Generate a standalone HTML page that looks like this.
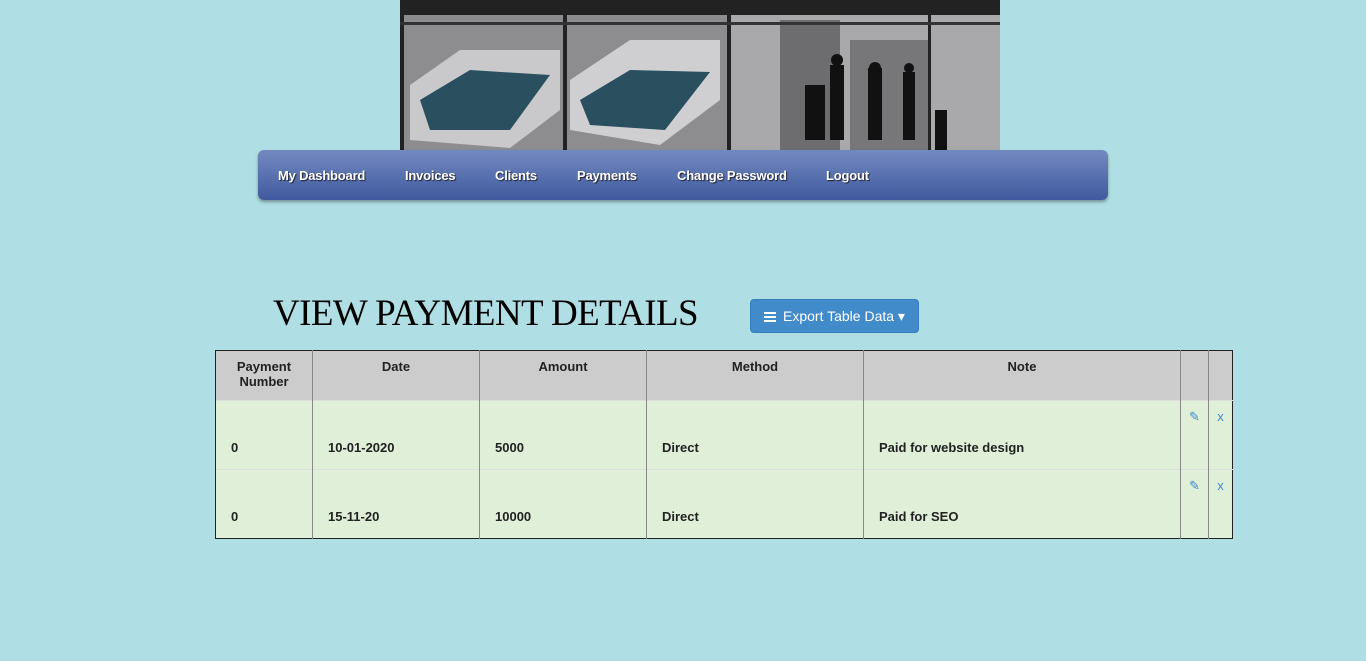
<!DOCTYPE html>
<html><head><style>
body{margin:0;background:#afdfe4;font-family:"Liberation Sans",sans-serif;width:1366px;height:661px;overflow:hidden;position:relative}
.banner{position:absolute;left:400px;top:0;width:600px;height:150px}
.nav{position:absolute;left:258px;top:150px;width:850px;height:50px;border-radius:6px;background:linear-gradient(#7389c0,#3f5a9e);box-shadow:0 2px 3px rgba(0,0,0,.35)}
.nav a{position:absolute;top:18px;color:#fff;font-size:13px;font-weight:bold;text-shadow:1px 1px 1px #223;letter-spacing:-0.2px}
h1{position:absolute;left:273px;top:292px;margin:0;font-family:"Liberation Serif",serif;font-weight:normal;font-size:37px;letter-spacing:-0.6px}
.btn{position:absolute;left:750px;top:299px;width:169px;height:34px;background:#428bca;border:1px solid #357ebd;border-radius:4px;box-sizing:border-box;color:#fff;font-size:14px;line-height:32px;padding-left:32px}
.btn i{position:absolute;left:13px;top:12px;width:12px;height:2px;background:#fff;box-shadow:0 4px #fff,0 8px #fff}
table{position:absolute;left:215px;top:350px;border-collapse:collapse;border:1px solid #222;font-size:13px;font-weight:bold;color:#222}
th{background:#cccccc;height:50px;vertical-align:top;padding-top:8px;box-sizing:border-box;border-left:1px solid #888;text-align:center;font-size:13px}
td{background:#dfefd8;height:69px;border-left:1px solid #888;border-top:1px solid #ddd;padding:0 0 0 15px;vertical-align:top;padding-top:39px;box-sizing:border-box}
td.f,th.f{border-left:1px solid #222}
td.ic{padding:8px 0 0 0;text-align:center;color:#428bca;font-weight:normal}
</style></head><body>
<svg class="banner" viewBox="0 0 600 150">
<rect width="600" height="150" fill="#8d8d90"/>
<rect width="600" height="15" fill="#222"/>
<rect x="330" y="15" width="270" height="135" fill="#a9a9ab"/>
<rect x="380" y="20" width="60" height="130" fill="#6d6d70"/>
<rect x="450" y="40" width="80" height="110" fill="#77777a"/>
<polygon points="10,85 60,50 160,50 160,110 110,148 10,140" fill="#c9c9cc"/>
<polygon points="20,100 70,70 150,75 110,130 30,130" fill="#2a5060"/>
<polygon points="170,80 230,40 320,40 320,100 260,145 170,130" fill="#cfcfd2"/>
<polygon points="180,100 230,70 310,72 265,130 190,125" fill="#2a5060"/>
<rect x="0" y="15" width="4" height="135" fill="#222"/>
<rect x="163" y="15" width="4" height="135" fill="#222"/>
<rect x="327" y="15" width="4" height="135" fill="#222"/>
<rect x="528" y="15" width="3" height="135" fill="#222"/>
<rect x="0" y="22" width="600" height="3" fill="#333"/>
<g fill="#111"><rect x="405" y="85" width="20" height="55"/><rect x="430" y="65" width="14" height="75"/><rect x="468" y="68" width="14" height="72"/><rect x="503" y="72" width="12" height="68"/><circle cx="437" cy="60" r="6"/><circle cx="475" cy="68" r="6"/><circle cx="509" cy="68" r="5"/><rect x="535" y="110" width="12" height="40"/></g>
</svg>
<div class="nav">
<a style="left:20px">My Dashboard</a><a style="left:147px">Invoices</a><a style="left:237px">Clients</a><a style="left:319px">Payments</a><a style="left:419px">Change Password</a><a style="left:568px">Logout</a>
</div>
<h1>VIEW PAYMENT DETAILS</h1>
<div class="btn"><i></i>Export Table Data ▾</div>
<table>
<tr><th class="f" style="width:97px">Payment<br>Number</th><th style="width:167px">Date</th><th style="width:167px">Amount</th><th style="width:217px">Method</th><th style="width:317px">Note</th><th style="width:28px"></th><th style="width:24px"></th></tr>
<tr><td class="f">0</td><td>10-01-2020</td><td>5000</td><td>Direct</td><td>Paid for website design</td><td class="ic">✎</td><td class="ic">x</td></tr>
<tr><td class="f">0</td><td>15-11-20</td><td>10000</td><td>Direct</td><td>Paid for SEO</td><td class="ic">✎</td><td class="ic">x</td></tr>
</table>
</body></html>
